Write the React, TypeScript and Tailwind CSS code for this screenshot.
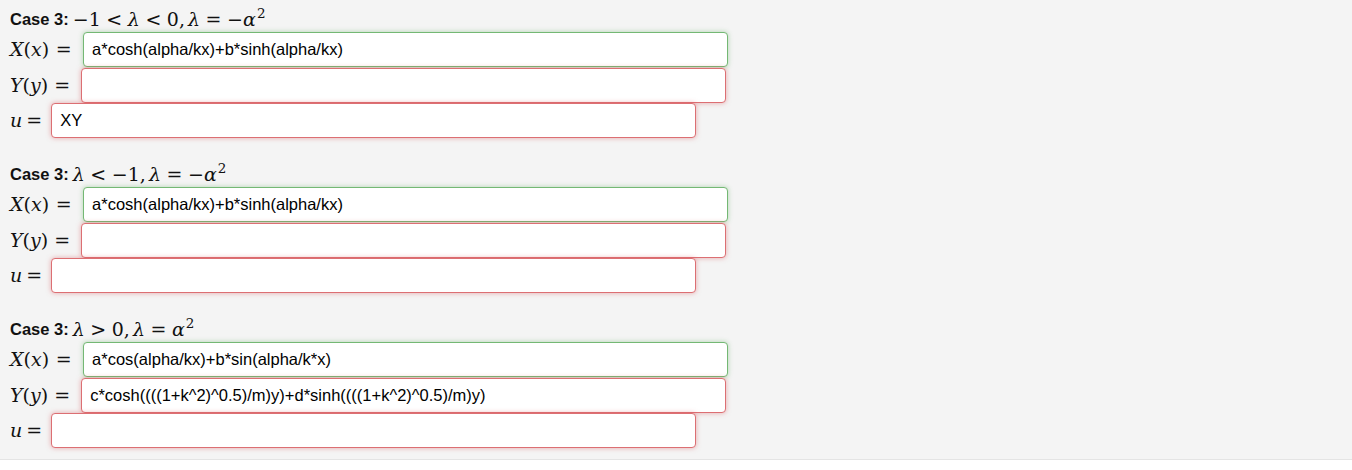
const mathFont = "font-['DejaVu_Serif',serif] text-[19px] leading-none";

function I({ children }: { children: React.ReactNode }) {
  return <span className="italic">{children}</span>;
}

// relation symbol with KaTeX-like thick spacing
function Rel({ children, w = "w-[27px]" }: { children: React.ReactNode; w?: string }) {
  return <span className={`inline-block ${w} text-center`}>{children}</span>;
}

function Minus() {
  return <span className="inline-block w-[16px] text-center">−</span>;
}

function Sup({ children }: { children: React.ReactNode }) {
  return <span className="relative -top-[8px] ml-px text-[13.5px]">{children}</span>;
}

type Row = { label: React.ReactNode; value: string; ok: boolean };

type Section = { cond: React.ReactNode; rows: Row[] };

const xLabel = (
  <>
    <I>X</I>(<I>x</I>)<Rel w="w-[29px]">=</Rel>
  </>
);
const yLabel = (
  <>
    <I>Y</I>(<I>y</I>)<Rel w="w-[28px]">=</Rel>
  </>
);
const uLabel = (
  <>
    <I>u</I>
    <Rel w="w-[24px]">=</Rel>
  </>
);

const SECTIONS: Section[] = [
  {
    cond: (
      <>
        <Minus />1<Rel>&lt;</Rel>
        <I>λ</I>
        <Rel>&lt;</Rel>0,<span className="ml-[3px]" />
        <I>λ</I>
        <Rel>=</Rel>
        <Minus />
        <I>α</I>
        <Sup>2</Sup>
      </>
    ),
    rows: [
      { label: xLabel, value: "a*cosh(alpha/kx)+b*sinh(alpha/kx)", ok: true },
      { label: yLabel, value: "", ok: false },
      { label: uLabel, value: "XY", ok: false },
    ],
  },
  {
    cond: (
      <>
        <I>λ</I>
        <Rel>&lt;</Rel>
        <Minus />1,<span className="ml-[3px]" />
        <I>λ</I>
        <Rel>=</Rel>
        <Minus />
        <I>α</I>
        <Sup>2</Sup>
      </>
    ),
    rows: [
      { label: xLabel, value: "a*cosh(alpha/kx)+b*sinh(alpha/kx)", ok: true },
      { label: yLabel, value: "", ok: false },
      { label: uLabel, value: "", ok: false },
    ],
  },
  {
    cond: (
      <>
        <I>λ</I>
        <Rel>&gt;</Rel>0,<span className="ml-[3px]" />
        <I>λ</I>
        <Rel>=</Rel>
        <I>α</I>
        <Sup>2</Sup>
      </>
    ),
    rows: [
      { label: xLabel, value: "a*cos(alpha/kx)+b*sin(alpha/k*x)", ok: true },
      { label: yLabel, value: "c*cosh((((1+k^2)^0.5)/m)y)+d*sinh((((1+k^2)^0.5)/m)y)", ok: false },
      { label: uLabel, value: "", ok: false },
    ],
  },
];

export default function App() {
  return (
    <div className="min-h-[470px] bg-white">
      <div className="bg-[#f4f4f4] border-b border-[#e4e4e4] pl-[10px] pt-[6px] pb-[11px] font-['Liberation_Sans',Arial,sans-serif] text-[#111]">
        {SECTIONS.map((s, i) => (
          <div key={i} className={i > 0 ? "mt-[23px]" : ""}>
            <div className="h-[26px] flex items-center">
              <span className="font-bold text-[16.5px] mr-[4px]">Case 3:</span>
              <span className={mathFont}>{s.cond}</span>
            </div>
            <div className="flex flex-col gap-[0.5px]">
              {s.rows.map((r, j) => (
                <div key={j} className="flex items-center">
                  <span className={`${mathFont} whitespace-nowrap mr-[5px]`}>{r.label}</span>
                  <input
                    defaultValue={r.value}
                    className={`w-[645px] h-[35px] bg-white rounded-[4px] border px-[8px] text-[16.5px] text-black outline-none ${
                      r.ok
                        ? "border-[#74b874] shadow-[0_0_5px_rgba(90,170,90,0.45)]"
                        : "border-[#dc6f73] shadow-[0_0_5px_rgba(220,90,95,0.5)]"
                    }`}
                  />
                </div>
              ))}
            </div>
          </div>
        ))}
      </div>
    </div>
  );
}
